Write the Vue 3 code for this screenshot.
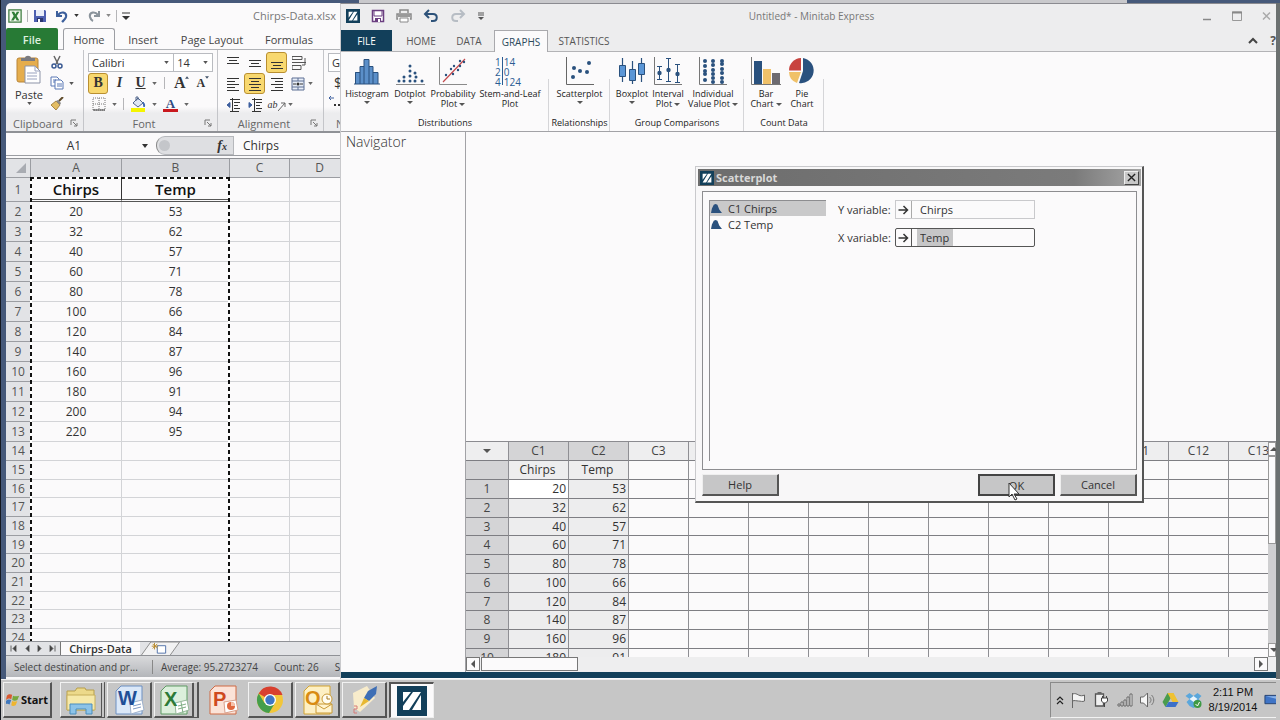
<template>
  <div class="screen">
    <div class="desktop">
      <!-- Excel -->
      <section class="excel">
        <header class="xl-title">
          <svg class="xl-logo" viewBox="0 0 16 16"><rect x="1" y="1" width="14" height="14" fill="#eef6ea" stroke="#3b7a3d" stroke-width="1.4" /><path d="M4 3h3l1.500 3L10 3h3l-3 5 3 5h-3L8.300 10 6.500 13H3.500l3-5z" fill="#2f7d36" /></svg>
          <i class="sep"></i>
          <svg class="ico14" viewBox="0 0 14 14"><path d="M1 1h11l1 1v11H1z" fill="#4d5fb0" /><rect x="3" y="1" width="8" height="6" fill="#e9edf8" /><rect x="4" y="9" width="6" height="4" fill="#2a356f" /><rect x="5" y="10" width="2" height="3" fill="#fff" /></svg>
          <svg class="ico14 ml" viewBox="0 0 14 14"><path d="M2 2v5h5" fill="none" stroke="#3c5f9c" stroke-width="2" /><path d="M3 6c3-4 9-3 8 2-.5 2-2 3-4 5" fill="none" stroke="#3c5f9c" stroke-width="2.200" /></svg>
          <svg class="caret" viewBox="0 0 6 4"><path d="M0 0h6L3 4z" fill="#333" /></svg>
          <svg class="ico14 ml" viewBox="0 0 14 14"><path d="M12 2v5H7" fill="none" stroke="#8b949c" stroke-width="2" /><path d="M11 6C8 2 2 3 3 8c.5 2 1 3 3 4" fill="none" stroke="#8b949c" stroke-width="2.200" /></svg>
          <svg class="caret" viewBox="0 0 6 4"><path d="M0 0h6L3 4z" fill="#888" /></svg>
          <i class="sep"></i>
          <svg class="caret-bar" viewBox="0 0 8 8"><path d="M0 1h8" stroke="#333" stroke-width="1.200" /><path d="M0 4h8L4 8z" fill="#333" /></svg>
          <span class="xl-name">Chirps-Data.xlsx</span>
        </header>

        <nav class="xl-tabs">
          <button class="xl-file">File</button>
          <button class="xl-home">Home</button>
          <button class="xl-insert">Insert</button>
          <button class="xl-layout">Page Layout</button>
          <button class="xl-formulas">Formulas</button>
        </nav>

        <div class="xl-ribbon">
          <div class="xl-group clip">
            <div class="xl-tools clip-tools">
              <button class="paste">
                <svg viewBox="0 0 26 30"><rect x="1" y="3" width="21" height="24" rx="2" fill="#e5ad4d" stroke="#b98538" /><path d="M5 6V3h4c0-3 6-3 6 0h4v3z" fill="#7a7a80" /><path d="M9 11h10l5 5v12H9z" fill="#fff" stroke="#8d93a8" /><path d="M19 11v5h5M11 18h10M11 21h10M11 24h10" fill="none" stroke="#9aa3bf" /></svg>
                <span>Paste</span>
                <svg class="caret" viewBox="0 0 6 4"><path d="M0 0h6L3 4z" fill="#555" /></svg>
              </button>
              <div class="clip-side">
                <svg class="ico14" viewBox="0 0 14 14"><path d="M4 1l4 8M10 1L6 9" stroke="#666" stroke-width="1.500" /><circle cx="4" cy="11" r="2" fill="none" stroke="#3a5a93" stroke-width="1.500" /><circle cx="10" cy="11" r="2" fill="none" stroke="#3a5a93" stroke-width="1.500" /></svg>
                <div class="row"><svg class="ico14" viewBox="0 0 14 14"><path d="M1 1h6l2 2v7H1z" fill="#fff" stroke="#5a79b5" /><path d="M5 4h6l2 2v7H5z" fill="#fff" stroke="#5a79b5" /><path d="M3 4h3M3 6h2M7 8h5M7 10h5" stroke="#5a79b5" /></svg><svg class="caret" viewBox="0 0 6 4"><path d="M0 0h6L3 4z" fill="#555" /></svg></div>
                <svg class="ico14" viewBox="0 0 14 14"><path d="M1 8l5-4 4 4-4 5z" fill="#e3bd63" stroke="#a98543" /><path d="M6 4l2-1 3 3-1 2z" fill="#888" /><path d="M9 4l4-4" stroke="#5f4b2b" stroke-width="2" /></svg>
              </div>
            </div>
            <div class="xl-label"><span>Clipboard</span><svg viewBox="0 0 8 8"><path d="M1 6V1h5M3 3l4 4M7 4v3H4" fill="none" stroke="#777" /></svg></div>
          </div>

          <div class="xl-group font">
            <div class="xl-tools font-tools">
              <div class="row combos">
                <label class="combo wide"><select aria-label="Font"><option>Calibri</option></select><svg class="caret" viewBox="0 0 6 4"><path d="M0 0h6L3 4z" fill="#555" /></svg></label>
                <label class="combo"><select aria-label="Font size"><option>14</option></select><svg class="caret" viewBox="0 0 6 4"><path d="M0 0h6L3 4z" fill="#555" /></svg></label>
              </div>
              <div class="row letters">
                <button class="tool on"><b>B</b></button>
                <button class="tool"><em>I</em></button>
                <button class="tool"><u>U</u></button>
                <svg class="caret" viewBox="0 0 6 4"><path d="M0 0h6L3 4z" fill="#666" /></svg>
                <i class="sep"></i>
                <button class="tool big">A<svg class="tick" viewBox="0 0 6 4"><path d="M0 4h6L3 0z" fill="#44546a" /></svg></button>
                <button class="tool small">A<svg class="tick" viewBox="0 0 6 4"><path d="M0 0h6L3 4z" fill="#44546a" /></svg></button>
              </div>
              <div class="row fills">
                <svg class="ico14" viewBox="0 0 14 14"><path d="M1 1h12v12H1zM7 1v12M1 7h12" fill="none" stroke="#777" stroke-dasharray="1 1" /><path d="M1 13h12" stroke="#444" /></svg>
                <svg class="caret" viewBox="0 0 6 4"><path d="M0 0h6L3 4z" fill="#666" /></svg>
                <i class="sep"></i>
                <svg class="ico16" viewBox="0 0 16 16"><path d="M3 7l5-5 5 5-5 4z" fill="#dfe7f4" stroke="#53668c" /><path d="M6 5V1h2v3" fill="none" stroke="#53668c" /><path d="M13 6c2 2 2 4 1 5z" fill="#3c68b2" stroke="#3c68b2" /><rect x="1" y="12" width="14" height="4" fill="#f5f500" /></svg>
                <svg class="caret" viewBox="0 0 6 4"><path d="M0 0h6L3 4z" fill="#666" /></svg>
                <span class="font-color">A</span>
                <svg class="caret" viewBox="0 0 6 4"><path d="M0 0h6L3 4z" fill="#666" /></svg>
              </div>
            </div>
            <div class="xl-label"><span>Font</span><svg viewBox="0 0 8 8"><path d="M1 6V1h5M3 3l4 4M7 4v3H4" fill="none" stroke="#777" /></svg></div>
          </div>

          <div class="xl-group align">
            <div class="xl-tools align-tools">
              <button class="tool"><svg viewBox="0 0 14 14"><path d="M1 1.500h12M3 4.500h8M1 7.500h12" stroke="#333" /></svg></button>
              <button class="tool"><svg viewBox="0 0 14 14"><path d="M1 4.500h12M3 7.500h8M1 10.500h12" stroke="#333" /></svg></button>
              <button class="tool on"><svg viewBox="0 0 14 14"><path d="M1 6.500h12M3 9.500h8M1 12.500h12" stroke="#333" /></svg></button>
              <button class="tool"><svg viewBox="0 0 14 14"><path d="M0 .5h10v3H0zM0 6.500h14M0 9.500h9v4H0zM13 2v7h-3" fill="none" stroke="#555" /></svg></button>
              <button class="tool"><svg viewBox="0 0 14 14"><path d="M1 1.500h12M1 4.500h8M1 7.500h12M1 10.500h8M1 13.500h12" stroke="#333" /></svg></button>
              <button class="tool on"><svg viewBox="0 0 14 14"><path d="M1 1.500h12M3 4.500h8M1 7.500h12M3 10.500h8M1 13.500h12" stroke="#333" /></svg></button>
              <button class="tool"><svg viewBox="0 0 14 14"><path d="M1 1.500h12M5 4.500h8M1 7.500h12M5 10.500h8M1 13.500h12" stroke="#333" /></svg></button>
              <button class="tool"><svg viewBox="0 0 14 14"><path d="M1 1h12v12H1zM7 1v3M7 10v3M1 4h12M1 10h12" fill="#e8eef8" stroke="#5c6f94" /><path d="M2 7h3M9 7h3" stroke="#333" /><circle cx="7" cy="7" r="1.500" fill="#333" /></svg><svg class="caret" viewBox="0 0 6 4"><path d="M0 0h6L3 4z" fill="#666" /></svg></button>
              <button class="tool"><svg viewBox="0 0 14 14"><path d="M4 1.500h10M8 4.500h6M8 7.500h4M8 10.500h6M4 13.500h9M6.500 0v14" stroke="#333" /><path d="M4 4.500L1 7l3 2.500z" fill="#3d5f9e" stroke="#3d5f9e" /></svg></button>
              <button class="tool"><svg viewBox="0 0 14 14"><path d="M4 1.500h10M8 4.500h6M8 7.500h4M8 10.500h6M4 13.500h9M6.500 0v14" stroke="#333" /><path d="M1 4.500L4 7l-3 2.500z" fill="#3d5f9e" stroke="#3d5f9e" /></svg></button>
              <button class="tool orient"><span>ab</span><svg viewBox="0 0 8 14"><path d="M0 13L7 5M7 9V5H3" fill="none" stroke="#666" /></svg></button>
              <svg class="caret" viewBox="0 0 6 4"><path d="M0 0h6L3 4z" fill="#666" /></svg>
            </div>
            <div class="xl-label"><span>Alignment</span><svg viewBox="0 0 8 8"><path d="M1 6V1h5M3 3l4 4M7 4v3H4" fill="none" stroke="#777" /></svg></div>
          </div>

          <div class="xl-group number">
            <div class="xl-tools number-tools">
              <label class="combo"><select aria-label="Number format"><option>General</option></select></label>
              <span class="dollar">$</span>
              <svg class="ico14" viewBox="0 0 14 14"><path d="M1 4h5M3 2L1 4l2 2" fill="none" stroke="#3d5f9e" /><path d="M6 11h2M10 11h3" stroke="#333" stroke-width="2" /></svg>
            </div>
            <div class="xl-label"><span>Number</span></div>
          </div>
        </div>

        <div class="formula-bar">
          <input class="name-box" aria-label="Name box" value="A1">
          <svg class="caret" viewBox="0 0 6 4"><path d="M0 0h6L3 4z" fill="#333" /></svg>
          <div class="fx-area"><i class="knob"></i><span class="fx">f<small>x</small></span></div>
          <input class="formula" aria-label="Formula" value="Chirps">
        </div>

        <div class="sheet">
          <table class="xl-table">
            <colgroup><col class="c-num"><col class="c-a"><col class="c-b"><col class="c-c"><col class="c-d"></colgroup>
            <thead>
              <tr>
                <th class="corner"><svg viewBox="0 0 10 10"><path d="M10 0v10H0z" fill="#a9acb2" /></svg></th>
                <th class="picked">A</th><th class="picked">B</th><th>C</th><th>D</th>
              </tr>
            </thead>
            <tbody>
              <tr class="names"><th>1</th><td>Chirps</td><td>Temp</td><td></td><td></td></tr>
              <tr v-for="(row, i) in samples" :key="i"><th>{{ i + 2 }}</th><td>{{ row[0] }}</td><td>{{ row[1] }}</td><td></td><td></td></tr>
            </tbody>
            <tbody class="blank">
              <tr v-for="n in 11" :key="n"><th>{{ n + 13 }}</th><td></td><td></td><td></td><td></td></tr>
            </tbody>
          </table>
          <div class="ants"></div>
        </div>

        <div class="sheet-tabs">
          <svg class="sheet-nav" viewBox="0 0 54 12"><path d="M5 3v6M10 3v6L7 6zM23 3v6l-3-3zM32 3v6l3-3zM44 3v6l3-3zM49 3v6" fill="#444" stroke="#444" stroke-width=".8" /></svg>
          <button class="sheet-tab">Chirps-Data</button>
          <svg class="new-sheet" viewBox="0 0 42 14"><path d="M0 14L10 0h31L31 14" fill="#f2f2f3" stroke="#888" /><path d="M17 4h9v8H17z" fill="#fff" stroke="#4d6ea8" /><path d="M14 1v7M11 4.500h7M12 2l5 5M17 2l-5 5" stroke="#b98a2c" /></svg>
        </div>
        <footer class="xl-status">
          <span class="hint">Select destination and pr...</span>
          <span>Average: 95.2723274</span>
          <span>Count: 26</span>
          <span>Sum</span>
        </footer>
      </section>

      <!-- Minitab Express -->
      <section class="minitab">
        <header class="mt-title">
          <svg class="mt-logo" viewBox="0 0 16 16"><rect width="16" height="16" fill="#123f5a" /><path d="M3 3h5L3 10zM9 3h4L7 13H3zM13 6v7H8z" fill="#fff" /></svg>
          <svg class="ico14" viewBox="0 0 14 14"><path d="M1.500 1.500h11v11h-11z" fill="#fff" stroke="#6b3f80" stroke-width="1.500" /><path d="M3 1v6h8V1" fill="none" stroke="#6b3f80" /><rect x="4" y="9" width="6" height="4" fill="#6b3f80" /><rect x="7" y="10" width="2" height="3" fill="#fff" /></svg>
          <svg class="ico16" viewBox="0 0 16 14"><path d="M4 4V1h8v3M2 10H1V5h14v5h-1" fill="none" stroke="#8a8a8a" stroke-width="1.500" /><path d="M2 5h12v3H2z" fill="#999" /><path d="M4 9h8v4H4z" fill="#fff" stroke="#8a8a8a" /></svg>
          <svg class="ico16" viewBox="0 0 16 14"><path d="M6 1L2 5l4 4M2 5h8c5 0 5 7 0 7H8" fill="none" stroke="#2d5279" stroke-width="2" /></svg>
          <svg class="ico16" viewBox="0 0 16 14"><path d="M10 1l4 4-4 4M14 5H6c-5 0-5 7 0 7h2" fill="none" stroke="#b7bdc4" stroke-width="2" /></svg>
          <svg class="caret-bar" viewBox="0 0 8 8"><path d="M1 1h6M1 3h6" stroke="#555" /><path d="M1 5h6L4 8z" fill="#555" /></svg>
          <span class="mt-name">Untitled* - Minitab Express</span>
          <div class="win-buttons">
            <button aria-label="Minimize"><svg viewBox="0 0 10 10"><path d="M1 8.500h8" stroke="#888" stroke-width="1.500" /></svg></button>
            <button aria-label="Maximize"><svg viewBox="0 0 10 10"><path d="M.5 1h9v8.500h-9z" fill="none" stroke="#999" /><path d="M0 1.500h10" stroke="#888" stroke-width="2" /></svg></button>
            <button aria-label="Close"><svg viewBox="0 0 10 10"><path d="M1 1.500l7 7M8 1.500l-7 7" stroke="#aaa" stroke-width="1.500" /></svg></button>
          </div>
        </header>

        <nav class="mt-tabs">
          <button class="mt-file">FILE</button>
          <button class="mt-home">HOME</button>
          <button class="mt-data">DATA</button>
          <button class="mt-graphs">GRAPHS</button>
          <button class="mt-stats">STATISTICS</button>
          <div class="mt-help">
            <button aria-label="Collapse ribbon"><svg viewBox="0 0 10 8"><path d="M1 6l4-4 4 4" fill="none" stroke="#444" stroke-width="2" /></svg></button>
            <button>?</button>
          </div>
        </nav>

        <div class="mt-ribbon">
          <div class="mt-group">
            <div class="mt-tools pad4">
              <button class="graph w44">
                <svg viewBox="0 0 30 28"><path d="M3 27V15h5V9h4V2h5v7h4v6h5v12z" fill="#5b8fc9" /><path d="M3.500 27V15.500H8M8 27V9.500h4M12 27V2.500h5V27M17 9.500h4V27M21 15.500h5V27M2 27h26" fill="none" stroke="#2a517e" /></svg>
                <span>Histogram</span><i class="arrow"></i>
              </button>
              <button class="graph w42">
                <svg viewBox="0 0 30 28"><g fill="#2a517e"><circle v-for="(d, i) in dotplot" :key="i" :cx="d[0]" :cy="d[1]" r="1.500" /></g><path d="M1 27.500h29" stroke="#8a8a8a" /></svg>
                <span>Dotplot</span><i class="arrow"></i>
              </button>
              <button class="graph w44">
                <svg viewBox="0 0 30 28"><path d="M1.500 0v27.500H29" fill="none" stroke="#8a8a8a" /><path d="M5 25L27 2" stroke="#c4484c" stroke-width="1.200" /><g fill="#2a517e"><circle cx="8" cy="18" r="1.200" /><circle cx="13" cy="12" r="1.200" /><circle cx="15" cy="17" r="1.200" /><circle cx="16" cy="9" r="1.200" /><circle cx="20" cy="13" r="1.200" /><circle cx="22" cy="9" r="1.200" /><circle cx="22" cy="4" r="1.200" /><circle cx="26" cy="5" r="1.200" /></g></svg>
                <span>Probability<br>Plot<i class="arrow in"></i></span>
              </button>
              <button class="graph w74">
                <span class="stem"><span>1<br>2<br>4</span><span>14<br>0<br>124</span></span>
                <span>Stem-and-Leaf<br>Plot</span>
              </button>
            </div>
            <div class="mt-label">Distributions</div>
          </div>
          <div class="mt-group">
            <div class="mt-tools">
              <button class="graph w60">
                <svg viewBox="0 0 30 28"><path d="M1.500 0v27.500H29" fill="none" stroke="#666" /><g fill="#2a517e"><circle cx="8" cy="20" r="2" /><circle cx="9" cy="11" r="2" /><circle cx="15" cy="14" r="2" /><circle cx="22" cy="15" r="2" /><circle cx="24" cy="6" r="2" /></g></svg>
                <span>Scatterplot</span><i class="arrow"></i>
              </button>
            </div>
            <div class="mt-label">Relationships</div>
          </div>
          <div class="mt-group">
            <div class="mt-tools pad4">
              <button class="graph w36">
                <svg viewBox="0 0 30 28"><path d="M5.500 1v24M15.500 4v23M24.500 1v24" stroke="#2a517e" stroke-width="1.200" /><path d="M2.500 8.500h6v11h-6zM12.500 12.500h6v11h-6zM21.500 6.500h6v11h-6z" fill="#5b96d6" stroke="#2a517e" /></svg>
                <span>Boxplot</span><i class="arrow"></i>
              </button>
              <button class="graph w36">
                <svg viewBox="0 0 30 28"><path d="M1.500 0v27.500H29" fill="none" stroke="#777" /><path d="M6.500 9v13M4 9.500h5M4 22.500h5M15.500 1v23M13 1.500h5M13 24.500h5M24.500 7v18M22 7.500h5M22 25.500h5" stroke="#2a517e" /><g fill="#2a517e"><circle cx="6.500" cy="16" r="2.200" /><circle cx="15.500" cy="13" r="2.200" /><circle cx="24.500" cy="17" r="2.200" /></g></svg>
                <span>Interval<br>Plot<i class="arrow in"></i></span>
              </button>
              <button class="graph w54">
                <svg viewBox="0 0 30 28"><path d="M1.500 0v27.500H29" fill="none" stroke="#777" /><g fill="#2a517e"><circle v-for="(d, i) in valueDots" :key="i" :cx="d[0]" :cy="d[1]" r="2" /></g></svg>
                <span>Individual<br>Value Plot<i class="arrow in"></i></span>
              </button>
            </div>
            <div class="mt-label">Group Comparisons</div>
          </div>
          <div class="mt-group">
            <div class="mt-tools pad4">
              <button class="graph w36">
                <svg viewBox="0 0 30 28"><path d="M.5 0v27.500H30" fill="none" stroke="#777" /><rect x="3" y="4" width="8" height="23" fill="#2a517e" /><rect x="12" y="12" width="8" height="15" fill="#f0c169" /><rect x="21" y="16" width="8" height="11" fill="#6d6a70" /></svg>
                <span>Bar<br>Chart<i class="arrow in"></i></span>
              </button>
              <button class="graph w36">
                <svg viewBox="0 0 30 28"><path d="M16 1a12.500 12.500 0 1 1-4 25l4-12z" fill="#2a517e" /><path d="M14 1a12.500 12.500 0 0 0-12 12.500h12z" fill="#c8433f" /><path d="M2 15h12l-4 11A12 12 0 0 1 2 15z" fill="#f0c169" /></svg>
                <span>Pie<br>Chart</span>
              </button>
            </div>
            <div class="mt-label">Count Data</div>
          </div>
        </div>

        <div class="mt-body">
          <aside class="navigator">Navigator</aside>
          <main class="work">
            <div class="output"></div>
            <div class="worksheet">
              <div class="ws-view">
                <table class="ws-table">
                  <colgroup><col class="c-row"><col v-for="n in 13" :key="n" class="c-col"></colgroup>
                  <thead>
                    <tr><th><i class="arrow"></i></th><th v-for="n in 13" :key="n" :class="{ picked: n < 3 }">C{{ n }}</th></tr>
                  </thead>
                  <tbody>
                    <tr class="ws-names"><th></th><td>Chirps</td><td>Temp</td><td v-for="n in 11" :key="n"></td></tr>
                    <tr v-for="(row, i) in samples.slice(0, 10)" :key="i">
                      <th>{{ i + 1 }}</th><td :class="{ current: i === 0 }">{{ row[0] }}</td><td>{{ row[1] }}</td><td v-for="n in 11" :key="n"></td>
                    </tr>
                  </tbody>
                </table>
              </div>
              <div class="v-scroll">
                <button aria-label="Scroll up"><svg viewBox="0 0 8 6"><path d="M0 5h8L4 1z" fill="#555" /></svg></button>
                <i class="v-thumb"></i>
                <button aria-label="Scroll down" class="down"><svg viewBox="0 0 8 6"><path d="M0 1h8L4 5z" fill="#555" /></svg></button>
              </div>
              <div class="h-scroll">
                <button aria-label="Scroll left"><svg viewBox="0 0 6 8"><path d="M5 0v8L1 4z" fill="#555" /></svg></button>
                <i class="h-thumb"></i>
                <button aria-label="Scroll right" class="right"><svg viewBox="0 0 6 8"><path d="M1 0v8l4-4z" fill="#555" /></svg></button>
              </div>
            </div>
          </main>
        </div>
        <div class="mt-status"></div>
      </section>

      <!-- Scatterplot dialog -->
      <form class="dialog" @submit.prevent>
        <header class="dlg-title">
          <svg class="dlg-logo" viewBox="0 0 16 16"><rect width="16" height="16" fill="#123f5a" /><path d="M3 3h5L3 10zM9 3h4L7 13H3zM13 6v7H8z" fill="#fff" /></svg>
          <span>Scatterplot</span>
          <button type="button" aria-label="Close"><svg viewBox="0 0 10 10"><path d="M1 1l8 8M9 1L1 9" stroke="#222" stroke-width="1.500" /></svg></button>
        </header>
        <div class="dlg-body">
          <ul class="columns">
            <li v-for="(c, i) in columns" :key="c" :class="{ chosen: i === 0 }">
              <svg viewBox="0 0 12 12"><path d="M0 11l1-5 2-4 2-1 2 1 2 5 3 4z" fill="#2a517e" /></svg>{{ c }}
            </li>
          </ul>
          <div class="fields">
            <div class="field">
              <label for="y-var">Y variable:</label>
              <div class="box"><svg viewBox="0 0 10 10"><path d="M0 5h8M5 1l4 4-4 4" fill="none" stroke="#333" stroke-width="1.500" /></svg><input id="y-var" v-model="yVar"></div>
            </div>
            <div class="field">
              <label for="x-var">X variable:</label>
              <div class="box focused"><svg viewBox="0 0 10 10"><path d="M0 5h8M5 1l4 4-4 4" fill="none" stroke="#333" stroke-width="1.500" /></svg><input id="x-var" v-model="xVar" class="marked"></div>
            </div>
          </div>
        </div>
        <div class="dlg-buttons">
          <button type="button">Help</button>
          <span class="grow"></span>
          <button type="submit" class="default">OK</button>
          <button type="button">Cancel</button>
        </div>
        <svg class="pointer" viewBox="0 0 12 19"><path d="M1 1v14l3-3 3 6 2-1-3-5h5z" fill="#fff" stroke="#333" /></svg>
      </form>
    </div>

    <!-- Taskbar -->
    <footer class="taskbar">
      <button class="start"><svg viewBox="0 0 16 16"><path d="M1 3c2-2 4-2 6-1L6 7C4 6 3 6 0 8z" fill="#d9582f" /><path d="M8 3c2 1 4 1 7 0l-2 5c-2 1-4 1-6 0z" fill="#76a83c" /><path d="M0 9c2-2 4-2 6-1l-2 5c-2-1-3-1-5 0z" fill="#3f78bd" /><path d="M7 9c2 1 4 1 6 0l-2 5c-2 1-4 1-5 0z" fill="#efb52f" /></svg>Start</button>
      <button class="task stack1" aria-label="Explorer">
        <svg viewBox="0 0 32 30"><path d="M2 6h8l2-3h8l1 2h8v20H2z" fill="#ecd98a" stroke="#b79f4c" /><path d="M2 10h28v15H2z" fill="#f6e9a9" stroke="#c6ae5b" /><path d="M5 29V19h22v10h-6v-5H11v5z" fill="#8cc3e8" stroke="#4b8dbd" /></svg>
      </button>
      <button class="task" aria-label="Word">
        <svg viewBox="0 0 32 30"><path d="M8 1h21v28H3V6z" fill="#dbe8f8" stroke="#6d90c2" /><path d="M17 18l12-3 2 10-13 4z" fill="#fff" stroke="#9fb2cc" /><path d="M20 21l8-2M20 24l8-2" stroke="#7f9bc4" /><text x="5" y="20" class="app-letter" fill="#1f4e96">W</text></svg>
      </button>
      <button class="task stack2" aria-label="Excel">
        <svg viewBox="0 0 32 30"><path d="M8 1h21v28H3V6z" fill="#dcefdc" stroke="#5f9b64" /><path d="M17 18l12-3 2 10-13 4z" fill="#fff" stroke="#96b89a" /><path d="M20 21l8-2M20 24l8-2M23 17l2 11" stroke="#7fae84" /><text x="6" y="21" class="app-letter" fill="#2c7a37">X</text></svg>
      </button>
      <button class="task flat" aria-label="PowerPoint">
        <svg viewBox="0 0 32 30"><path d="M8 1h21v28H3V6z" fill="#fbe3d8" stroke="#cf6a44" /><path d="M17 17l12-2 2 10-13 3z" fill="#fff" stroke="#d9a08c" /><circle cx="24" cy="21" r="4" fill="#e0673e" /><path d="M24 21v-4a4 4 0 0 1 4 4z" fill="#f6c2ab" /><text x="6" y="21" class="app-letter" fill="#cf4a1e">P</text></svg>
      </button>
      <button class="task" aria-label="Chrome">
        <svg viewBox="0 0 32 30"><circle cx="16" cy="15" r="13" fill="#f2c63a" /><path d="M16 15L4.700 8.500A13 13 0 0 1 28.500 10H16z" fill="#d8402f" /><path d="M4.700 8.500A13 13 0 0 0 15 28l6-10-10.500 0z" fill="#459e4b" /><circle cx="16" cy="15" r="6" fill="#fff" /><circle cx="16" cy="15" r="4.700" fill="#3f76c4" /></svg>
      </button>
      <button class="task" aria-label="Outlook">
        <svg viewBox="0 0 32 30"><path d="M8 1h21v28H3V6z" fill="#fdf0c4" stroke="#d3a432" /><path d="M15 19h16v9H15z" fill="#fff3cd" stroke="#c99a36" /><path d="M15 19l8 5 8-5" fill="none" stroke="#c99a36" /><circle cx="26" cy="14" r="5" fill="#fffdf2" stroke="#c99a36" /><path d="M26 11v3h3" fill="none" stroke="#a87b22" /><text x="4" y="20" class="app-letter" fill="#d98b12">O</text></svg>
      </button>
      <button class="task" aria-label="Journal">
        <svg viewBox="0 0 32 30"><path d="M5 8l14-7 8 12-15 14-6-4z" fill="#f8eccb" /><path d="M29 1l-9 5-4 7 5 3 7-7z" fill="#3f6fb5" /><path d="M16 13l5 3-9 6z" fill="#e7b832" /><path d="M6 21h3v3H6v4h3" fill="none" stroke="#d77a78" /></svg>
      </button>
      <button class="task active" aria-label="Minitab Express">
        <svg viewBox="0 0 30 30"><rect width="30" height="30" fill="#123f5a" /><path d="M6 6h8L6 16zM16 6h8L12 24H6V20zM24 9v15h-9z" fill="#fff" /></svg>
      </button>
      <div class="tray">
        <svg class="up" viewBox="0 0 8 10"><path d="M1 5l3-3 3 3M1 9l3-3 3 3" fill="none" stroke="#222" stroke-width="1.200" /></svg>
        <svg viewBox="0 0 16 16"><path d="M2 1v15M2 2c3-1 4 0 6 1s4 1 6 0v6c-2 1-4 0-6 0s-4-1-6 0" fill="#f4f4f4" stroke="#666" /></svg>
        <svg viewBox="0 0 16 16"><path d="M2 2h8v12H2z" fill="#f0f0f0" stroke="#555" stroke-width="1.300" /><path d="M4 0h4v2H4z" fill="#666" /><path d="M8 6h6v3l-2 2h-2L8 9zM9 4v2M13 4v2M11 11v4" fill="#fff" stroke="#444" /></svg>
        <svg viewBox="0 0 16 16"><path d="M1.500 12h2v2h-2zM4.500 10h2v4h-2zM7.500 8h2v6h-2zM10.500 5h2v9h-2zM13.500 2h2v12h-2z" fill="#f6f6f6" stroke="#666" /></svg>
        <svg viewBox="0 0 16 16"><path d="M1 5h3l4-4v14l-4-4H1z" fill="#f6f6f6" stroke="#666" /><path d="M10 5c2 2 2 4 0 6M12 3c3 3 3 7 0 10" fill="none" stroke="#777" /></svg>
        <svg viewBox="0 0 16 16"><path d="M5 1h6l-5 9-3 5-3-5z" fill="#4a9c4e" /><path d="M5 1h6l5 9h-6z" fill="#efc132" /><path d="M3 15l3-5h10l-3 5z" fill="#3b70c9" /></svg>
        <svg viewBox="0 0 16 16"><path d="M4 1l4 3 4-3 4 3-3 3 3 3-4 4-4 2-4-2-3-4 3-3-4-3z" fill="#5aa7dc" /><path d="M8 4l4 3-4 3-4-3z" fill="#e9f5fd" /><circle cx="12" cy="12" r="4" fill="#3f9a44" /><path d="M10 12l2 2 2-4" fill="none" stroke="#fff" /></svg>
        <div class="clock"><span>2:11 PM</span><span>8/19/2014</span></div>
        <svg class="monitor" viewBox="0 0 13 14"><path d="M1 2h14v9H1z" fill="#3f74c6" stroke="#23406f" /><path d="M2 3l12 3V3z" fill="#8db4ea" /></svg>
      </div>
    </footer>
  </div>
</template>

<script setup>
import { ref } from 'vue'

const samples = [
  [20, 53],
  [32, 62],
  [40, 57],
  [60, 71],
  [80, 78],
  [100, 66],
  [120, 84],
  [140, 87],
  [160, 96],
  [180, 91],
  [200, 94],
  [220, 95]
]

const columns = ['C1 Chirps', 'C2 Temp']
const yVar = ref('Chirps')
const xVar = ref('Temp')

// dot positions inside the ribbon icons
const dotplot = [
  [4, 24], [9, 24], [9, 20], [15, 24], [15, 19], [15, 14], [15, 9],
  [20, 24], [20, 16], [21, 20], [27, 24]
]
const valueDots = [
  [7, 4], [7, 9], [7, 14], [7, 17], [7, 23],
  [15, 4], [15, 8], [15, 13], [15, 17], [15, 21], [15, 25],
  [24, 4], [24, 7], [24, 12], [24, 16], [24, 21], [24, 25]
]
</script>

<style>
body {
  margin: 0;
  overflow: hidden;
}
</style>

<style scoped>
.screen {
  display: flex;
  flex-direction: column;
  height: 100vh;
  box-sizing: border-box;
  border-left: 1px solid #14181f;
  background: #c6c6c6;
  font-family: "Open Sans", "Noto Sans", sans-serif;
  font-size: 11px;
  color: #333;
}

.screen * {
  box-sizing: border-box;
}

button,
input,
select {
  margin: 0;
  padding: 0;
  border: 0;
  border-radius: 0;
  background: none;
  font: inherit;
  color: inherit;
  appearance: none;
  outline: none;
}

svg {
  display: block;
  flex: none;
}

.desktop {
  position: relative;
  flex: 1;
  min-height: 0;
  display: grid;
  grid-template-columns: 334px 1fr;
  padding: 3px 4px 0 5px;
  background:
    linear-gradient(90deg, #46597a 28%, #c9c9cc 28% 88%, #46597a 88%) 0 0 / 100% 3px no-repeat,
    linear-gradient(90deg, #46597a 50%, #6b7070 50%);
}

.row {
  display: flex;
  align-items: center;
}

.caret {
  width: 5px;
  height: 3px;
}

.caret-bar {
  width: 8px;
  height: 8px;
}

.ico14 {
  width: 14px;
  height: 14px;
}

.ico16 {
  width: 16px;
  height: 14px;
}

.sep {
  width: 1px;
  height: 12px;
  background: #b5b5b8;
}

.arrow {
  display: block;
  width: 0;
  border: 3px solid transparent;
  border-top-color: #555;
  border-bottom: 0;
}

.arrow.in {
  display: inline-block;
  margin-left: 2px;
  vertical-align: middle;
}

/* Excel */
.excel {
  display: flex;
  flex-direction: column;
  min-width: 0;
  min-height: 0;
  overflow: hidden;
  background: #fbfafb;
  border-top-left-radius: 5px;
}

.xl-title {
  display: flex;
  align-items: center;
  gap: 5px;
  height: 25px;
  padding: 0 4px 0 2px;
}

.xl-logo {
  width: 14px;
  height: 14px;
}

.ml {
  margin-left: 3px;
}

.xl-name {
  margin-left: auto;
  color: #777;
}

.xl-tabs {
  display: flex;
  height: 22px;
  border-bottom: 1px solid #b0b2b6;
}

.xl-tabs button {
  height: 22px;
  color: #444;
}

.xl-tabs .xl-file {
  width: 52px;
  background: #277a35;
  border-radius: 2px 2px 0 0;
  color: #dff0df;
  font-weight: 600;
}

.xl-tabs .xl-home {
  width: 52px;
  margin-left: 5px;
  border: 1px solid #9c9ea3;
  border-bottom: 0;
  border-radius: 3px 3px 0 0;
  background: #fbfafb;
}

.xl-insert {
  width: 56px;
}

.xl-layout {
  width: 82px;
}

.xl-formulas {
  width: 72px;
}

.xl-ribbon {
  display: flex;
  height: 83px;
  border-bottom: 2px solid #8f9196;
  background: linear-gradient(#fbfafb 70%, #ececee 78%);
}

.xl-group {
  display: flex;
  flex-direction: column;
  flex: none;
  border-right: 1px solid #c4c5c9;
}

.clip {
  width: 78px;
}

.font {
  width: 134px;
}

.align {
  width: 106px;
}

.number {
  width: 80px;
}

.xl-tools {
  flex: 1;
}

.xl-label {
  display: flex;
  align-items: center;
  height: 16px;
  padding-right: 5px;
  color: #666;
}

.xl-label span {
  flex: 1;
  text-align: center;
}

.number .xl-label span {
  padding-left: 12px;
  text-align: left;
}

.xl-label svg {
  width: 8px;
  height: 8px;
}

.clip-tools {
  display: flex;
  padding: 5px 0 0 8px;
  gap: 6px;
}

.paste {
  display: flex;
  flex-direction: column;
  align-items: center;
  width: 30px;
}

.paste svg:first-child {
  width: 26px;
  height: 30px;
}

.paste span {
  margin-top: 2px;
}

.clip-side {
  display: flex;
  flex-direction: column;
  gap: 7px;
}

.clip-side .row {
  gap: 5px;
}

.font-tools {
  padding: 3px 4px 0 4px;
}

.combos {
  height: 19px;
}

.combo {
  display: flex;
  align-items: center;
  width: 40px;
  height: 19px;
  padding: 0 4px 0 3px;
  border: 1px solid #b9bbc0;
  background: #fff;
}

.combo.wide {
  width: 86px;
  border-right: 0;
}

.combo select {
  flex: 1;
  min-width: 0;
}

.letters {
  gap: 1px;
  height: 22px;
  font-family: "Liberation Serif", serif;
}

.letters .sep {
  margin: 0 6px;
}

.tool {
  display: flex;
  align-items: center;
  justify-content: center;
  width: 21px;
  height: 21px;
  font-size: 14px;
}

.tool.on {
  border: 1px solid #b98f31;
  border-radius: 3px;
  background: #f8d86f;
}

.tool.big {
  font-size: 16px;
  font-weight: 700;
}

.tool.small {
  font-size: 12px;
  font-weight: 700;
}

.tool em,
.tool u {
  font-weight: 700;
}

.tick {
  align-self: flex-start;
  width: 4px;
  height: 3px;
  margin-top: 3px;
}

.fills {
  gap: 6px;
  height: 20px;
  padding-left: 4px;
}

.fills .ico16 {
  height: 16px;
}

.font-color {
  width: 15px;
  height: 15px;
  border-bottom: 3px solid #c9181e;
  font: 700 13px/13px "Liberation Serif", serif;
  text-align: center;
  color: #2f4a80;
}

.align-tools {
  display: grid;
  grid-template-columns: 22px 22px 22px 28px;
  align-content: start;
  align-items: center;
  padding: 2px 0 0 4px;
}

.align-tools .tool {
  height: 21px;
}

.align-tools .tool svg {
  width: 14px;
  height: 14px;
}

.align-tools .tool:nth-child(8) {
  width: 28px;
  gap: 3px;
}

.align-tools .tool .caret {
  width: 5px;
  height: 3px;
}

.tool.orient {
  font: italic 10px "Liberation Serif", serif;
}

.align-tools .tool.orient svg {
  width: 8px;
}

.number-tools {
  padding: 3px 0 0 4px;
}

.number .combo {
  width: 70px;
}

.dollar {
  display: block;
  height: 22px;
  padding-left: 6px;
  font-size: 14px;
  line-height: 22px;
}

.formula-bar {
  display: flex;
  align-items: center;
  height: 23px;
  padding-top: 3px;
  border-bottom: 1px solid #9b9da2;
}

.name-box {
  width: 136px;
  text-align: center;
  font-size: 12px;
}

.formula-bar .caret {
  width: 6px;
  height: 4px;
}

.fx-area {
  display: flex;
  align-items: center;
  justify-content: space-between;
  width: 78px;
  height: 19px;
  margin-left: 8px;
  padding: 0 6px 0 2px;
  border: 1px solid #b6b8bc;
  border-left-color: #888;
  border-radius: 9px 0 0 9px;
  background: #dedfe2;
}

.knob {
  width: 11px;
  height: 11px;
  border-radius: 6px;
  background: #c4c6ca;
}

.fx {
  font: italic 700 14px "Liberation Serif", serif;
}

.fx small {
  font-size: 10px;
}

.formula {
  flex: 1;
  min-width: 0;
  padding-left: 9px;
  font-size: 12px;
}

.sheet {
  position: relative;
  flex: 1;
  min-height: 0;
  margin-top: 2px;
  overflow: hidden;
  border-top: 1px solid #8f9196;
}

.xl-table {
  width: 344px;
  table-layout: fixed;
  border-collapse: separate;
  border-spacing: 0;
  font-size: 12px;
  line-height: 16px;
}

.c-num {
  width: 25px;
}

.c-a {
  width: 91px;
}

.c-b {
  width: 108px;
}

.c-c,
.c-d {
  width: 60px;
}

.xl-table th,
.xl-table td {
  height: 20px;
  padding: 0;
  border-right: 1px solid #d3d4d7;
  border-bottom: 1px solid #d3d4d7;
  text-align: center;
  font-weight: 400;
}

.xl-table th {
  border-color: #9b9da2;
  background: #e2e3e6;
  color: #555;
}

.xl-table thead th {
  height: 19px;
}

.xl-table thead .picked {
  background: #d8d9dd;
}

.corner svg {
  width: 10px;
  height: 10px;
  margin-left: 10px;
}

.xl-table .names th,
.xl-table .names td {
  height: 24px;
}

.xl-table .names td:nth-child(-n + 3) {
  border-right-color: #333;
  border-bottom: 3px double #555;
  font-size: 15px;
  font-weight: 600;
  color: #111;
}

.blank th,
.blank td {
  height: 19px;
}

.blank tr:nth-child(3n) th,
.blank tr:nth-child(3n) td {
  height: 18px;
}

/* copy marquee over A:B */
.ants {
  position: absolute;
  top: 18px;
  bottom: 0;
  left: 24px;
  width: 200px;
  background:
    repeating-linear-gradient(90deg, #111 0 4px, #fff 4px 7px) 0 0 / 100% 2px no-repeat,
    repeating-linear-gradient(#111 0 4px, #fff 4px 7px) 0 0 / 2px 100% no-repeat,
    repeating-linear-gradient(#111 0 4px, #fff 4px 7px) 100% 0 / 2px 100% no-repeat;
}

.sheet-tabs {
  display: flex;
  height: 15px;
  border-top: 1px solid #8f9196;
  border-bottom: 1px solid #8f9196;
  background: #e2e3e6;
}

.sheet-nav {
  width: 54px;
  height: 13px;
}

.sheet-tab {
  width: 80px;
  border-left: 1px solid #777;
  background: #fbfafb;
  font-weight: 600;
  line-height: 13px;
}

.new-sheet {
  width: 42px;
  height: 13px;
}

.xl-status {
  display: flex;
  align-items: center;
  gap: 16px;
  height: 21px;
  margin-bottom: 2px;
  padding-left: 8px;
  background: linear-gradient(#d9dadc, #b4b6ba);
  font-size: 10px;
  color: #444;
  white-space: nowrap;
}

.hint {
  flex: none;
  width: 139px;
  margin-right: -8px;
  border-right: 1px solid #888;
}

/* Minitab Express */
.minitab {
  display: flex;
  flex-direction: column;
  min-width: 0;
  min-height: 0;
  border-top: 1px solid #8b8b90;
  border-left: 1px solid #c9c9cc;
  background: #fbfafb;
}

.mt-title {
  display: flex;
  align-items: center;
  gap: 11px;
  height: 24px;
  padding: 0 4px 0 5px;
  background: #ededee;
}

.mt-logo {
  width: 14px;
  height: 14px;
}

.mt-name {
  flex: 1;
  padding-right: 64px;
  text-align: center;
  color: #777;
  font-size: 10px;
}

.win-buttons {
  display: flex;
  gap: 20px;
}

.win-buttons svg {
  width: 10px;
  height: 10px;
}

.mt-tabs {
  display: flex;
  align-items: flex-end;
  height: 24px;
  border-bottom: 1px solid #b3b3b6;
  background: #ededee;
  font-size: 10px;
  color: #555;
}

.mt-tabs > button {
  height: 21px;
}

.mt-file {
  width: 51px;
  background: #123f5a;
  color: #fff;
}

.mt-home {
  width: 58px;
}

.mt-data {
  width: 38px;
}

.mt-tabs .mt-graphs {
  width: 54px;
  height: 22px;
  margin: 0 0 -1px 6px;
  border: 1px solid #a9a9ad;
  border-bottom: 0;
  background: #fbfafb;
  color: #2c4a5c;
}

.mt-stats {
  width: 72px;
}

.mt-help {
  display: flex;
  align-items: center;
  gap: 12px;
  height: 21px;
  margin-left: auto;
  font-size: 12px;
  font-weight: 700;
}

.mt-help svg {
  width: 10px;
  height: 8px;
}

.mt-ribbon {
  display: flex;
  height: 80px;
  border-bottom: 1px solid #a2a2a6;
  font-size: 9px;
  color: #222;
}

.mt-group {
  display: flex;
  flex-direction: column;
  background: linear-gradient(#d5d5d8, #d5d5d8) 100% 100% / 1px 52px no-repeat;
}

.mt-tools {
  display: flex;
  flex: 1;
}

.pad4 {
  padding: 0 4px;
}

.graph {
  display: flex;
  flex-direction: column;
  align-items: center;
  padding-top: 5px;
  line-height: 10px;
  white-space: nowrap;
}

.graph > svg,
.stem {
  width: 30px;
  height: 28px;
  margin-bottom: 4px;
}

.graph .arrow:not(.in) {
  margin-top: 2px;
}

.w36 {
  width: 36px;
}

.w42 {
  width: 42px;
}

.w44 {
  width: 44px;
}

.w54 {
  width: 54px;
}

.w60 {
  width: 61px;
}

.w74 {
  width: 70px;
}

.stem {
  display: flex;
  font-size: 10px;
  line-height: 10px;
  color: #2a5c93;
  text-align: left;
}

.stem span:first-child {
  height: 28px;
  padding-right: 1px;
  border-right: 1px solid #2a5c93;
}

.stem span:last-child {
  padding-left: 1px;
}

.mt-label {
  height: 14px;
  line-height: 12px;
  text-align: center;
}

.mt-body {
  display: flex;
  flex: 1;
  min-height: 0;
}

.navigator {
  width: 125px;
  padding: 2px 0 0 5px;
  border-right: 1px solid #a2a2a6;
  font-size: 14px;
  line-height: 16px;
  font-weight: 300;
  color: #333;
}

.work {
  display: flex;
  flex-direction: column;
  flex: 1;
  min-width: 0;
}

.output {
  flex: 1;
}

.worksheet {
  display: grid;
  grid-template: 215px 15px / 1fr 8px;
  border-top: 1px solid #8b8b90;
  background: #eeeeef;
}

.ws-view {
  min-width: 0;
  overflow: hidden;
}

.ws-table {
  width: 823px;
  table-layout: fixed;
  border-collapse: separate;
  border-spacing: 0;
  font-size: 12px;
  line-height: 16px;
}

.c-row {
  width: 43px;
}

.c-col {
  width: 60px;
}

.ws-table th,
.ws-table td {
  height: 19px;
  padding: 0 2px 0 0;
  border-right: 1px solid #8f8f94;
  border-bottom: 1px solid #7e7e83;
  background: #fbfafb;
  text-align: right;
  font-weight: 400;
}

.ws-table th {
  padding: 0;
  background: #eeeeef;
  text-align: center;
  color: #444;
}

.ws-table thead .picked,
.ws-table tbody th {
  background: #d4d4d6;
}

.ws-table th .arrow {
  margin: 0 auto;
  border-width: 4px;
  border-bottom: 0;
}

.ws-table td:nth-child(2),
.ws-table td:nth-child(3) {
  background: #ededee;
}

.ws-table td.current {
  background: #fff;
}

.ws-table .ws-names td {
  text-align: center;
}

.ws-table tbody tr:nth-child(4n) th,
.ws-table tbody tr:nth-child(4n) td {
  height: 18px;
}

.v-scroll {
  display: flex;
  flex-direction: column;
  background: #cfcfd1;
  overflow: hidden;
}

.v-scroll button {
  height: 14px;
  padding-left: 1px;
  border: 1px solid #999;
  background: #fbfafb;
}

.v-scroll svg {
  width: 8px;
  height: 6px;
}

.v-thumb {
  height: 88px;
  border: 1px solid #999;
  background: #fbfafb;
}

.v-scroll .down {
  margin-top: auto;
}

.h-scroll {
  grid-column: 1;
  display: flex;
  gap: 1px;
}

.h-scroll button {
  display: flex;
  align-items: center;
  justify-content: center;
  width: 14px;
  height: 14px;
  border: 1px solid #777;
  background: #fbfafb;
}

.h-scroll svg {
  width: 6px;
  height: 8px;
}

.h-thumb {
  width: 97px;
  height: 14px;
  border: 1px solid #777;
  background: #fbfafb;
}

.h-scroll .right {
  margin-left: auto;
}

.mt-status {
  height: 6px;
  margin-bottom: 1px;
  background: #123f5a;
}

/* dialog */
.dialog {
  position: absolute;
  top: 166px;
  left: 694px;
  display: flex;
  flex-direction: column;
  width: 449px;
  height: 337px;
  padding: 2px 5px 5px 6px;
  border: 1px solid #c9c9cc;
  border-right: 2px solid #555;
  border-bottom: 2px solid #555;
  background: #f8f7f8;
  font-size: 11px;
}

.dlg-title {
  display: flex;
  align-items: center;
  gap: 2px;
  height: 17px;
  margin: 0 -4px;
  padding: 0 2px;
  background: linear-gradient(90deg, #6d6d6d, #7b7b7b 85%, #a6a6a6);
  font-weight: 700;
  color: #d8d8d8;
}

.dlg-logo {
  width: 14px;
  height: 14px;
}

.dlg-title button {
  display: flex;
  align-items: center;
  justify-content: center;
  width: 15px;
  height: 14px;
  margin-left: auto;
  border: 1px solid #eee;
  border-right-color: #444;
  border-bottom-color: #444;
  background: #c8c8c8;
}

.dlg-title button svg {
  width: 9px;
  height: 9px;
}

.dlg-body {
  display: flex;
  flex: 1;
  gap: 12px;
  margin-top: 5px;
  padding: 8px 6px;
  border: 1px solid #8d8d90;
  background: #fbfafb;
}

.columns {
  width: 117px;
  margin: 0;
  padding: 0;
  border-left: 1px solid #8d8d90;
  list-style: none;
}

.columns li {
  display: flex;
  align-items: center;
  gap: 6px;
  height: 16px;
  padding-left: 1px;
}

.columns .chosen {
  border-top: 1px solid #8d8d90;
  background: #c9c9ca;
}

.columns svg {
  width: 11px;
  height: 11px;
}

.fields {
  display: flex;
  flex-direction: column;
  gap: 9px;
}

.field {
  display: flex;
  align-items: center;
}

.field label {
  width: 57px;
}

.box {
  display: flex;
  align-items: center;
  width: 140px;
  height: 19px;
  border: 1px solid #c9c9cc;
}

.box.focused {
  border-color: #555;
  border-radius: 2px;
}

.box svg {
  width: 15px;
  height: 10px;
  padding: 0 2px;
}

.box input {
  width: 100%;
  padding-left: 8px;
  border-left: 1px solid #aaa;
  line-height: 17px;
}

.box .marked {
  width: 42px;
  background: linear-gradient(90deg, #fbfafb 5px, #c6c6c7 5px);
  border-left-color: #555;
}

.dlg-buttons {
  display: flex;
  gap: 5px;
  margin-top: 4px;
}

.dlg-buttons button {
  width: 77px;
  height: 22px;
  border: 1px solid #eee;
  border-right: 2px solid #555;
  border-bottom: 2px solid #555;
  background: #c6c6c7;
}

.dlg-buttons .default {
  border: 2px solid #444;
}

.grow {
  flex: 1;
}

.pointer {
  position: absolute;
  left: 312px;
  top: 315px;
  width: 12px;
  height: 19px;
}

/* Taskbar */
.taskbar {
  display: flex;
  align-items: center;
  gap: 2px;
  height: 41px;
  padding: 0 4px 0 2px;
  border-top: 1px solid #eee;
  background: #c6c6c6;
}

.start,
.task {
  display: flex;
  align-items: center;
  justify-content: center;
  height: 36px;
  border: 1px solid #f2f2f2;
  border-right: 2px solid #555;
  border-bottom: 2px solid #555;
}

.start {
  gap: 1px;
  width: 49px;
  margin-right: 6px;
  font-size: 11px;
  font-weight: 700;
  color: #111;
}

.start svg {
  width: 14px;
  height: 14px;
}

.task {
  width: 45px;
}

.task svg {
  width: 32px;
  height: 30px;
}

.task.stack1 {
  border-right: 4px double #555;
}

.task.stack2 {
  border-right: 7px double #555;
}

.task.flat {
  border-color: transparent;
}

.task.active {
  border: 2px solid #555;
  border-right: 1px solid #eee;
  border-bottom: 1px solid #eee;
  background: #fbfafb;
}

.task.active svg {
  width: 30px;
}

.app-letter {
  font: 700 20px "Liberation Sans", sans-serif;
}

.tray {
  display: flex;
  align-items: center;
  gap: 6px;
  height: 36px;
  margin-left: auto;
  padding-left: 5px;
  border: 1px solid #8a8a8a;
  border-right: 0;
  border-bottom-color: #f2f2f2;
}

.tray svg {
  width: 17px;
  height: 16px;
}

.tray .up {
  width: 8px;
  height: 10px;
}

.clock {
  display: flex;
  flex-direction: column;
  align-items: center;
  width: 50px;
  font: 11px/15px "Liberation Sans", sans-serif;
  color: #111;
}

.tray .monitor {
  width: 12px;
  height: 14px;
}
</style>
